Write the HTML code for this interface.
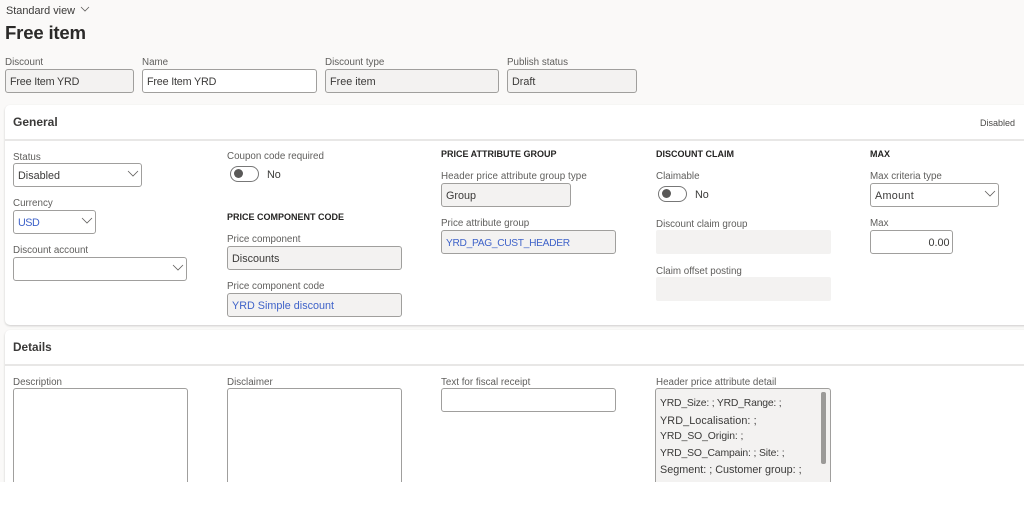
<!DOCTYPE html>
<html><head><meta charset="utf-8"><style>
html,body{margin:0;padding:0;background:#fff}
#p{position:relative;width:1024px;height:508px;overflow:hidden;background:#fff;font-family:"Liberation Sans",sans-serif;color:#323130}
#c{position:absolute;left:0;top:0;width:1024px;height:482px;overflow:hidden;background:#faf9f8;filter:blur(.35px)}
.t{position:absolute;white-space:nowrap;line-height:14px}
.l{font-size:9.8px;color:#5f5e5c;height:12px;line-height:12px;margin-top:2px}
.f{position:absolute;box-sizing:border-box;height:24px;border:1.5px solid #a09f9d;border-radius:3px;background:#fff;font-size:10.8px;line-height:25px;padding-left:4px;color:#3b3a39;white-space:nowrap;overflow:hidden}
.f div{height:16.5px;line-height:16.5px}
.g{background:#f3f2f1}.b{color:#3f63c9}
.h{font-size:9px;font-weight:bold;color:#252423;margin-top:0}
.card{position:absolute;left:5px;width:1030px;background:#fff;border-radius:5px;box-shadow:0 1px 2px rgba(0,0,0,.18)}
.line{position:absolute;left:0;right:0;height:2px;background:#e8e7e6}
.e{position:absolute;background:#f3f2f1;border-radius:2px;width:175px;height:24px}
svg{position:absolute}
.tg{position:absolute;box-sizing:border-box;width:29px;height:16px;border:1.5px solid #777;border-radius:8px;background:#fff}
.tg i{position:absolute;left:3px;top:2px;width:9px;height:9px;border-radius:50%;background:#5a5958}
</style></head><body><div id="p"><div id="c">
<div class="t" style="left:6px;top:4px;font-size:10.9px;color:#3b3a39">Standard view</div>
<svg style="left:80px;top:6px" width="10" height="7" viewBox="0 0 10 7"><path d="M1 1l4 4 4-4" fill="none" stroke="#605e5c" stroke-width=".8"/></svg>
<div class="t" style="left:5px;top:22px;font-size:18.6px;line-height:22px;font-weight:bold;color:#2b2a29;letter-spacing:-.2px">Free item</div>

<div class="t l" style="left:5px;top:55px">Discount</div>
<div class="f g" style="left:5px;top:69px;width:129px;letter-spacing:-.2px">Free Item YRD</div>
<div class="t l" style="left:142px;top:55px">Name</div>
<div class="f" style="left:142px;top:69px;width:175px;letter-spacing:-.2px">Free Item YRD</div>
<div class="t l" style="left:325px;top:55px">Discount type</div>
<div class="f g" style="left:325px;top:69px;width:174px">Free item</div>
<div class="t l" style="left:507px;top:55px">Publish status</div>
<div class="f g" style="left:507px;top:69px;width:130px">Draft</div>

<div class="card" style="top:105px;height:220px">
<div class="line" style="top:34px"></div>
<div class="t" style="left:8px;top:10px;font-size:12px;font-weight:bold;color:#3b3a39">General</div>
</div>
<div class="t" style="left:980px;top:116px;font-size:9px;color:#4b4a48">Disabled</div>

<div class="t l" style="left:13px;top:150px">Status</div>
<div class="f" style="left:13px;top:163px;width:129px">Disabled</div>
<svg style="left:127px;top:170px" width="12" height="8" viewBox="0 0 12 8"><path d="M1 1l5 5 5-5" fill="none" stroke="#605e5c" stroke-width=".8"/></svg>
<div class="t l" style="left:13px;top:196px">Currency</div>
<div class="f b" style="left:13px;top:210px;width:83px;letter-spacing:-.5px">USD</div>
<svg style="left:81px;top:217px" width="12" height="8" viewBox="0 0 12 8"><path d="M1 1l5 5 5-5" fill="none" stroke="#605e5c" stroke-width=".8"/></svg>
<div class="t l" style="left:13px;top:243px">Discount account</div>
<div class="f" style="left:13px;top:257px;width:174px"></div>
<svg style="left:172px;top:264px" width="12" height="8" viewBox="0 0 12 8"><path d="M1 1l5 5 5-5" fill="none" stroke="#605e5c" stroke-width=".8"/></svg>

<div class="t l" style="left:227px;top:149px">Coupon code required</div>
<div class="tg" style="left:230px;top:166px"><i></i></div>
<div class="t" style="left:267px;top:168px;font-size:10.8px;color:#3b3a39">No</div>
<div class="t h" style="left:227px;top:210px">PRICE COMPONENT CODE</div>
<div class="t l" style="left:227px;top:232px">Price component</div>
<div class="f g" style="left:227px;top:246px;width:175px">Discounts</div>
<div class="t l" style="left:227px;top:279px">Price component code</div>
<div class="f g b" style="left:227px;top:293px;width:175px">YRD Simple discount</div>

<div class="t h" style="left:441px;top:147px">PRICE ATTRIBUTE GROUP</div>
<div class="t l" style="left:441px;top:169px;letter-spacing:.08px">Header price attribute group type</div>
<div class="f g" style="left:441px;top:183px;width:130px">Group</div>
<div class="t l" style="left:441px;top:216px">Price attribute group</div>
<div class="f g b" style="left:441px;top:230px;width:175px;font-size:10.2px;letter-spacing:-.3px">YRD_PAG_CUST_HEADER</div>

<div class="t h" style="left:656px;top:147px">DISCOUNT CLAIM</div>
<div class="t l" style="left:656px;top:169px">Claimable</div>
<div class="tg" style="left:658px;top:186px"><i></i></div>
<div class="t" style="left:695px;top:188px;font-size:10.8px;color:#3b3a39">No</div>
<div class="t l" style="left:656px;top:217px">Discount claim group</div>
<div class="e" style="left:656px;top:230px"></div>
<div class="t l" style="left:656px;top:264px">Claim offset posting</div>
<div class="e" style="left:656px;top:277px"></div>

<div class="t h" style="left:870px;top:147px">MAX</div>
<div class="t l" style="left:870px;top:169px">Max criteria type</div>
<div class="f" style="left:870px;top:183px;width:129px;letter-spacing:.3px">Amount</div>
<svg style="left:984px;top:190px" width="12" height="8" viewBox="0 0 12 8"><path d="M1 1l5 5 5-5" fill="none" stroke="#605e5c" stroke-width=".8"/></svg>
<div class="t l" style="left:870px;top:216px">Max</div>
<div class="f" style="left:870px;top:230px;width:83px;text-align:right;padding:0 2.5px 0 0">0.00</div>

<div class="card" style="top:330px;height:200px">
<div class="line" style="top:34px"></div>
<div class="t" style="left:8px;top:10px;font-size:11.8px;font-weight:bold;color:#3b3a39">Details</div>
</div>
<div class="t l" style="left:13px;top:375px">Description</div>
<div class="f" style="left:13px;top:388px;width:175px;height:120px"></div>
<div class="t l" style="left:227px;top:375px">Disclaimer</div>
<div class="f" style="left:227px;top:388px;width:175px;height:120px"></div>
<div class="t l" style="left:441px;top:375px">Text for fiscal receipt</div>
<div class="f" style="left:441px;top:388px;width:175px"></div>
<div class="t l" style="left:656px;top:375px">Header price attribute detail</div>
<div class="f g" style="left:655px;top:388px;width:176px;height:120px;padding:7px 0 0 4px"><div style="font-size:10.4px;letter-spacing:-.2px">YRD_Size: ; YRD_Range: ;</div><div style="letter-spacing:.1px">YRD_Localisation: ;</div><div style="font-size:10.4px;letter-spacing:-.1px">YRD_SO_Origin: ;</div><div style="font-size:10.4px;letter-spacing:-.15px">YRD_SO_Campain: ; Site: ;</div><div>Segment: ; Customer group: ;</div></div>
<div style="position:absolute;left:821px;top:392px;width:5px;height:72px;background:#9b9a98;border-radius:2px"></div>
</div></div></body></html>
